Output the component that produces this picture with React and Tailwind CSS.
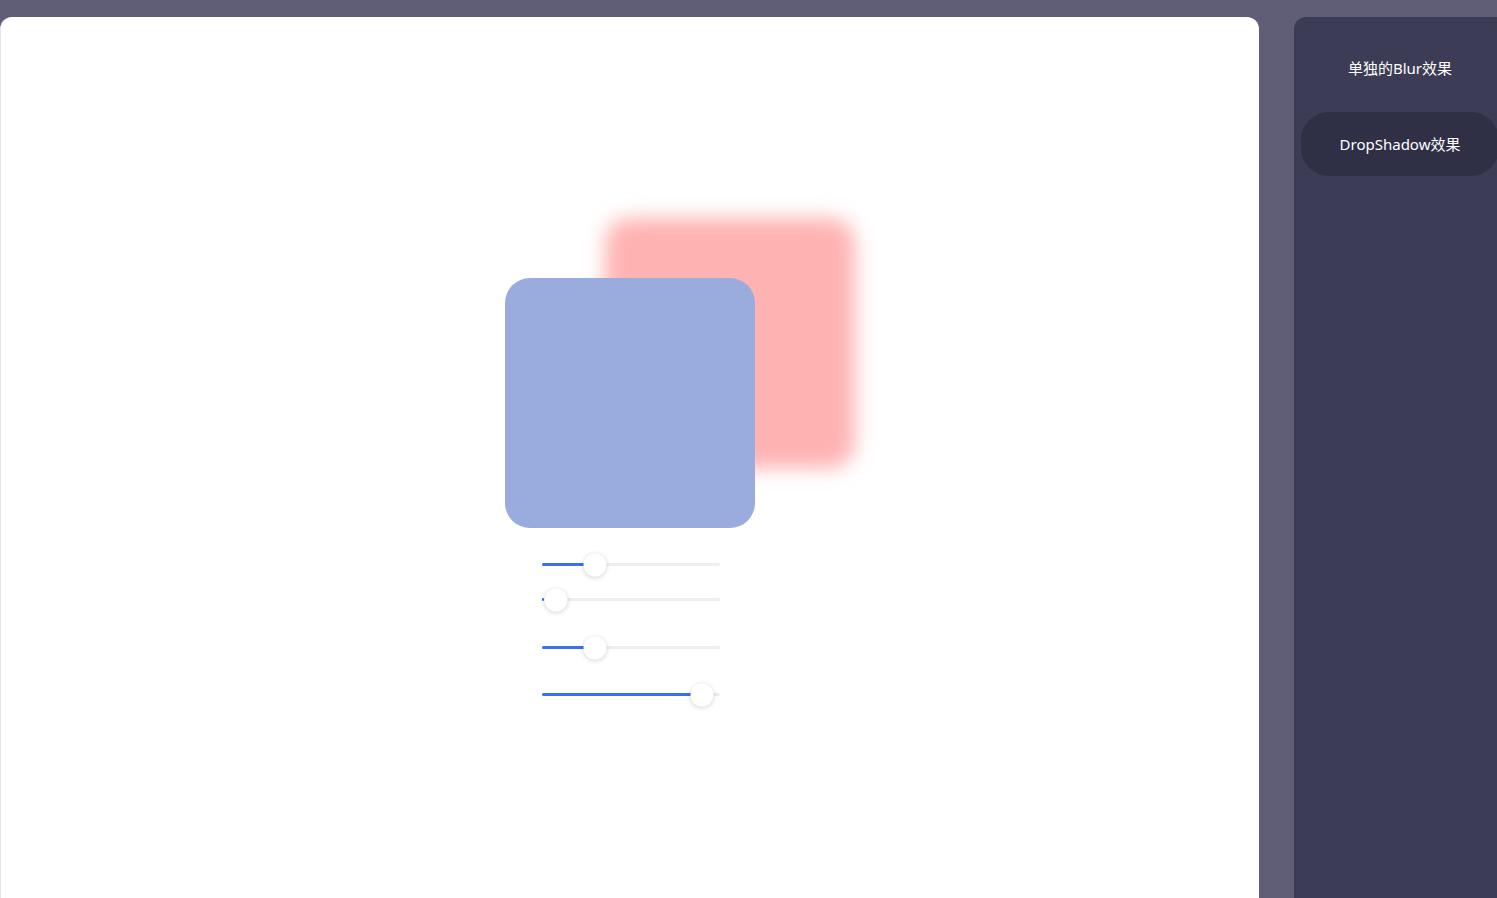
const SLIDERS = [
  { value: 30, mt: 'mt-[35px]' },
  { value: 8, mt: 'mt-[32px]' },
  { value: 30, mt: 'mt-[45px]' },
  { value: 90, mt: 'mt-[44px]' },
];

const MENU = [
  { label: '单独的Blur效果', active: false },
  { label: 'DropShadow效果', active: true },
];

function Slider({ value, mt, fillTo }) {
  return (
    <div className={`relative h-[3px] w-[178px] rounded-full bg-[#eeeeee] ${mt}`}>
      <div
        className="absolute left-0 top-0 h-[3px] rounded-full bg-[#3b6ff0]"
        style={{ width: `${fillTo ?? value}%` }}
      />
      <div
        className="absolute top-1/2 h-[23px] w-[23px] -translate-x-1/2 -translate-y-1/2 rounded-full bg-white shadow-[0_1px_5px_rgba(0,0,0,0.18)]"
        style={{ left: `${value}%` }}
      />
    </div>
  );
}

export default function App() {
  return (
    <div
      className="flex h-[898px] w-[1497px] overflow-hidden bg-[#605e77] pt-[17px]"
      style={{ fontFamily: '"Noto Sans", "Noto Sans CJK SC", sans-serif' }}
    >
      {/* preview panel */}
      <div className="flex w-[1259px] shrink-0 flex-col items-center rounded-t-[12px] border-l border-[#e4e4e4] bg-white pt-[261px]">
        <div className="relative h-[250px] w-[250px]">
          <div className="absolute left-[100px] top-[-60px] h-[250px] w-[250px] rounded-[25px] bg-[#ffb2b2] blur-[10px]" />
          <div className="relative h-[250px] w-[250px] rounded-[25px] bg-[#9aacdd]" />
        </div>
        <div className="flex flex-col items-center pl-[1px]">
          {SLIDERS.map((s, i) => (
            <Slider key={i} value={s.value} mt={s.mt} fillTo={i === 1 ? 1.5 : undefined} />
          ))}
        </div>
      </div>

      {/* side menu */}
      <div className="ml-[35px] flex w-[212px] shrink-0 flex-col gap-[12px] rounded-tl-[12px] bg-[#3c3c56] px-[7px] pt-[19px]">
        {MENU.map((m) => (
          <div
            key={m.label}
            className={`flex h-[64px] items-center justify-center rounded-[28px] text-[15px] text-white ${
              m.active ? 'bg-[#2f2f45]' : ''
            }`}
          >
            {m.label}
          </div>
        ))}
      </div>
    </div>
  );
}
